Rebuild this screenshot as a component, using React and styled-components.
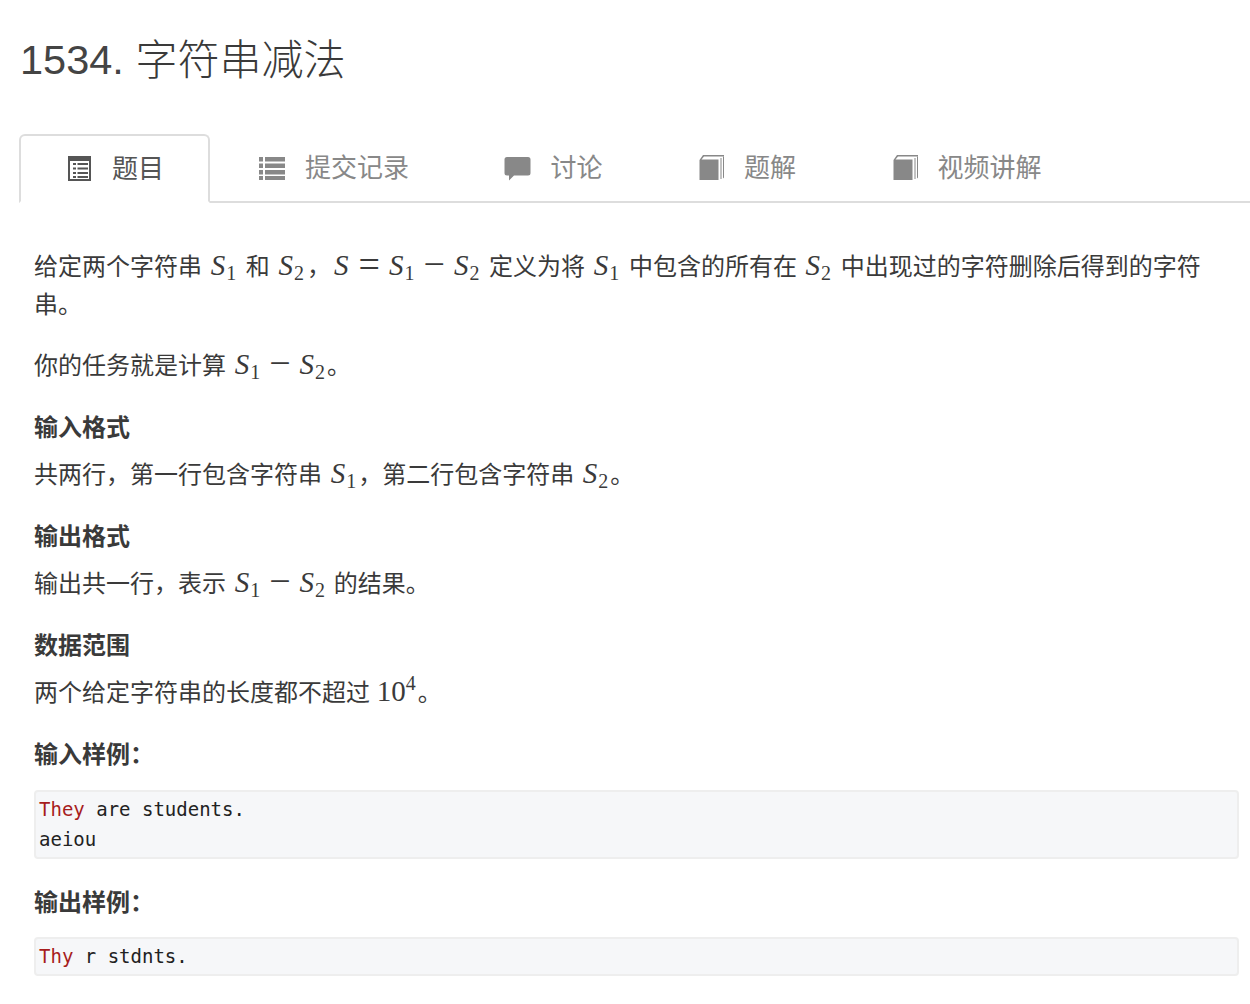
import React from "react";
import styled, { createGlobalStyle } from "styled-components";

const GlobalStyle = createGlobalStyle`
html, body { margin:0; padding:0; background:#fff; }
body {
  font-family:"Liberation Sans","Noto Sans CJK SC",sans-serif;
  color:#3a3a3a;
}
* { box-sizing:border-box; }
`;

const Page = styled.div`
  width:1250px;
  height:1004px;
  overflow:hidden;
  padding-left:19px;
`;

const Title = styled.h1`
  margin:0;
  padding:33px 0 0 1px;
  height:134px;
  font-size:42px;
  line-height:54px;
  font-weight:300;
  color:#3a3a3a;
`;

const TitleNum = styled.span`
  font-size:41.5px;
  color:#444;
  vertical-align:1px;
`;

const TabBar = styled.div`
  display:flex;
  height:69px;
  border-bottom:2px solid #ddd;
`;

const Tab = styled.div`
  display:flex;
  align-items:center;
  gap:20px;
  height:67px;
  padding:0 46.5px 4px 47px;
  font-size:26px;
  color:#888;
`;

const ActiveTab = styled(Tab)`
  height:69px;
  gap:18px;
  padding:0 44px 4px 45px;
  color:#555;
  border:2px solid #ddd;
  border-bottom-color:#fff;
  border-radius:6px 6px 0 0;
`;

const Icon = styled.svg`
  width:28px;
  height:28px;
  flex:none;
  margin-top:4px;
  fill:currentColor;
`;

const ListAltIcon = () => (
  <Icon viewBox="0 0 28 28">
    <path fillRule="evenodd" d="M2 1h23v25H2zM4 6v18h19V6z" />
    <path d="M7 8h3v2H7zM11.500 8H22v2H11.500zM7 12.500h3v2H7zM11.500 12.500H22v2H11.500zM7 17h3v2H7zM11.500 17H22v2H11.500zM7 21h3v2H7zM11.500 21H22v2H11.500z" />
  </Icon>
);

const ThListIcon = () => (
  <Icon viewBox="0 0 28 28">
    <path d="M2 3h4v4.500H2zM8 3h20v4.500H8zM2 9.500h4V14H2zM8 9.500h20V14H8zM2 16h4v4.500H2zM8 16h20v4.500H8zM2 22h4v4H2zM8 22h20v4H8z" />
  </Icon>
);

const CommentIcon = () => (
  <Icon viewBox="0 0 28 28">
    <path d="M4 3h21a2.500 2.500 0 0 1 2.500 2.500v13.500a2.500 2.500 0 0 1-2.500 2.500H11L6 26.500v-5H4A2.500 2.500 0 0 1 1.500 19V5.500A2.500 2.500 0 0 1 4 3z" />
  </Icon>
);

const BookIcon = () => (
  <Icon viewBox="0 0 28 28">
    <path d="M7 1h21v1.500H8L5.500 5.500H22.500V26h-19V6z" />
    <path d="M24.500 4h1v21h-1zM27 2.500h1.500V23L27 24.500z" />
  </Icon>
);

const Article = styled.div`
  width:1205px;
  margin-left:15px;
  padding-top:45px;
  font-size:24px;
  line-height:38px;
  color:#3a3a3a;
`;

const Para = styled.p`
  margin:0 0 ${(p) => p.$after ?? 24}px;
`;

const Heading = styled.h4`
  margin:0 0 ${(p) => p.$after ?? 9}px;
  font-size:24px;
  line-height:38px;
  font-weight:700;
`;

const Code = styled.pre`
  margin:0 0 25px;
  padding:2px 3px 3px;
  font-family:"DejaVu Sans Mono",monospace;
  font-size:19px;
  line-height:30px;
  color:#222;
  background:#f6f7f9;
  border:2px solid #eee;
  border-radius:4px;
`;

const Keyword = styled.span`
  color:#a71d1d;
`;

const MathText = styled.span`
  font-family:"Liberation Serif",serif;
  font-size:29px;
  line-height:0;
  white-space:nowrap;
  margin:0 ${(p) => p.$right ?? 2}px 0 ${(p) => p.$left ?? 2}px;
`;

const Var = styled.i`
  font-style:italic;
  letter-spacing:1px;
`;

const Sub = styled.span`
  font-size:20px;
  vertical-align:-5px;
  line-height:0;
`;

const Sup = styled.span`
  font-size:20px;
  vertical-align:11px;
  line-height:0;
`;

const Op = styled.span`
  margin:0 9px;
  font-size:38px;
  font-weight:400;
  line-height:0;
  vertical-align:-2px;
`;

const S = ({ n }) => (
  <>
    <Var>S</Var>
    {n && <Sub>{n}</Sub>}
  </>
);

const Diff = () => (
  <MathText>
    <S n="1" />
    <Op>−</Op>
    <S n="2" />
  </MathText>
);

const One = ({ n, right }) => (
  <MathText $right={right}>
    <S n={n} />
  </MathText>
);

export default function App() {
  return (
    <>
      <GlobalStyle />
      <Page>
        <Title>
          <TitleNum>1534.</TitleNum> 字符串减法
        </Title>
        <TabBar>
          <ActiveTab>
            <ListAltIcon />
            题目
          </ActiveTab>
          <Tab>
            <ThListIcon />
            提交记录
          </Tab>
          <Tab>
            <CommentIcon />
            讨论
          </Tab>
          <Tab>
            <BookIcon />
            题解
          </Tab>
          <Tab>
            <BookIcon />
            视频讲解
          </Tab>
        </TabBar>
        <Article>
          <Para $after={23}>
            给定两个字符串 <One n="1" right={3} /> 和 <One n="2" right={3} />，
            <MathText $left={3} $right={3}>
              <S />
              <Op>=</Op>
              <S n="1" />
              <Op>−</Op>
              <S n="2" />
            </MathText>{" "}
            定义为将 <One n="1" right={3} /> 中包含的所有在 <One n="2" right={3} /> 中出现过的字符删除后得到的字符串。
          </Para>
          <Para>
            你的任务就是计算 <Diff />。
          </Para>
          <Heading>输入格式</Heading>
          <Para>
            共两行，第一行包含字符串 <One n="1" />，第二行包含字符串 <One n="2" />。
          </Para>
          <Heading>输出格式</Heading>
          <Para>
            输出共一行，表示 <Diff /> 的结果。
          </Para>
          <Heading>数据范围</Heading>
          <Para>
            两个给定字符串的长度都不超过{" "}
            <MathText $left={0}>
              10<Sup>4</Sup>
            </MathText>
            。
          </Para>
          <Heading $after={16}>输入样例：</Heading>
          <Code>
            <Keyword>They</Keyword> are students.{"\n"}aeiou
          </Code>
          <Heading $after={15}>输出样例：</Heading>
          <Code>
            <Keyword>Thy</Keyword> r stdnts.
          </Code>
        </Article>
      </Page>
    </>
  );
}
